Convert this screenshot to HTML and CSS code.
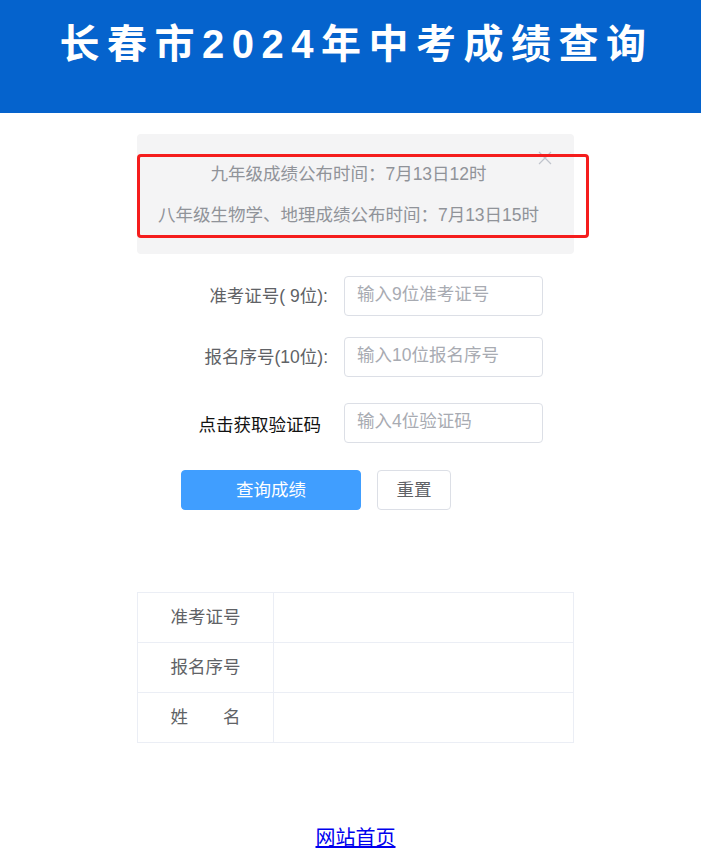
FILE: index.html
```html
<!DOCTYPE html>
<html lang="zh-CN">
<head>
<meta charset="utf-8">
<title>长春市2024年中考成绩查询</title>
<link rel="stylesheet" href="styles.css">
</head>
<body>
<header class="banner">
  <h1 class="title">长春市2024年中考成绩查询</h1>
</header>
<main class="page">
  <div class="wrap">
    <div class="notice">
      <p class="notice-line">九年级成绩公布时间：7月13日12时</p>
      <p class="notice-line notice-line2">八年级生物学、地理成绩公布时间：7月13日15时</p>
      <span class="notice-close">
        <svg width="14" height="14" viewBox="0 0 14 14"><path d="M1 1 L13 13 M13 1 L1 13" stroke="#c0c4cc" stroke-width="1.2" fill="none"/></svg>
      </span>
      <div class="mark"></div>
    </div>

    <form class="form">
      <div class="row row1">
        <label class="label">准考证号( 9位):</label>
        <input class="input" type="text" placeholder="输入9位准考证号">
      </div>
      <div class="row row2">
        <label class="label">报名序号(10位):</label>
        <input class="input" type="text" placeholder="输入10位报名序号">
      </div>
      <div class="row row3">
        <span class="label label-code">点击获取验证码</span>
        <input class="input" type="text" placeholder="输入4位验证码">
      </div>
      <div class="btns">
        <button type="button" class="btn btn-primary">查询成绩</button>
        <button type="button" class="btn btn-plain">重置</button>
      </div>
    </form>

    <table class="result">
      <tr><td class="k">准考证号</td><td class="v"></td></tr>
      <tr><td class="k">报名序号</td><td class="v"></td></tr>
      <tr><td class="k">姓　　名</td><td class="v"></td></tr>
    </table>
  </div>
  <div class="foot"><a href="#" class="home">网站首页</a></div>
</main>
</body>
</html>
```

FILE: styles.css
```css
html, body {
  margin: 0;
  padding: 0;
  background: #fff;
}
body {
  font-family: "Liberation Sans", "Noto Sans CJK SC", sans-serif;
  font-size: 17.5px;
  color: #606266;
}
.banner {
  height: 113px;
  background: #0563cd;
  box-sizing: border-box;
  padding-top: 19px;
  padding-left: 12px;
}
.title {
  margin: 0;
  text-align: center;
  color: #fff;
  font-family: "Liberation Sans", "Noto Sans CJK SC", sans-serif;
  font-weight: 700;
  font-size: 40px;
  line-height: 50px;
  letter-spacing: 7.5px;
}
.page {
  padding-left: 10px;
}
.wrap {
  width: 437px;
  margin: 0 auto;
}
.notice {
  position: relative;
  margin-top: 21px;
  height: 120px;
  box-sizing: border-box;
  background: #f4f4f5;
  border-radius: 4px;
  padding: 28px 14px 0 0;
  text-align: center;
  color: #909399;
}
.notice-line {
  margin: 0;
  line-height: 24px;
  white-space: nowrap;
}
.notice-line2 {
  margin-top: 17px;
}
.notice-close {
  position: absolute;
  top: 17px;
  right: 22px;
  width: 14px;
  height: 14px;
  display: block;
}
.notice-close svg {
  display: block;
}
.mark {
  position: absolute;
  top: 20px;
  left: 0;
  width: 452px;
  height: 84px;
  box-sizing: border-box;
  border: 3px solid #f51d1d;
  border-radius: 4px;
}
.form {
  margin-top: 22px;
}
.row {
  display: flex;
  align-items: center;
  gap: 16px;
}
.row2 { margin-top: 21px; }
.row3 { margin-top: 26px; }
.label {
  width: 191px;
  text-align: right;
  white-space: nowrap;
  color: #606266;
  padding-bottom: 4px;
}
.label-code {
  color: #111;
  box-sizing: border-box;
  padding-right: 7px;
  padding-bottom: 0;
}
.input {
  width: 199px;
  height: 40px;
  box-sizing: border-box;
  border: 1px solid #dcdfe6;
  border-radius: 4px;
  padding: 0 12px 3px;
  font-family: inherit;
  font-size: 17.5px;
  color: #606266;
  outline: none;
  background: #fff;
}
.input::placeholder {
  color: #a8abb2;
}
.btns {
  display: flex;
  gap: 16px;
  margin-top: 27px;
  padding-left: 44px;
}
.btn {
  height: 40px;
  box-sizing: border-box;
  border-radius: 4px;
  font-family: inherit;
  font-size: 17.5px;
  padding: 0 0 3px;
  cursor: pointer;
}
.btn-primary {
  width: 180px;
  background: #409eff;
  border: 1px solid #409eff;
  color: #fff;
}
.btn-plain {
  width: 74px;
  background: #fff;
  border: 1px solid #dcdfe6;
  color: #606266;
}
.result {
  margin-top: 82px;
  width: 437px;
  border-collapse: collapse;
  border: 1px solid #ebeef5;
}
.result td {
  border: 1px solid #ebeef5;
  height: 50px;
  padding: 0 0 5px;
  box-sizing: border-box;
}
.result .k {
  width: 136px;
  text-align: center;
  color: #606266;
}
.foot {
  margin-top: 83px;
  text-align: center;
  line-height: 24px;
}
.home {
  color: #0000ee;
  font-size: 20px;
  text-decoration: underline;
}
```
